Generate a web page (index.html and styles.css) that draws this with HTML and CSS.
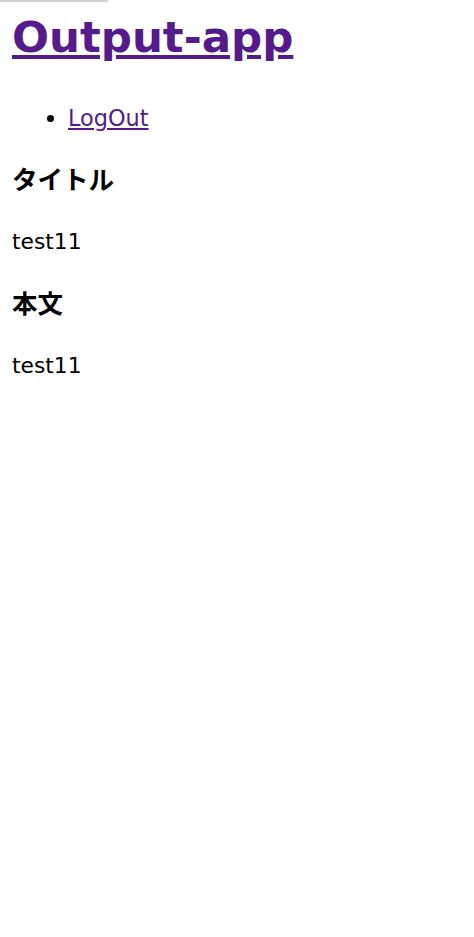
FILE: index.html
```html
<!DOCTYPE html>
<html lang="ja">
<head>
<meta charset="utf-8">
<title>Output-app</title>
<link rel="stylesheet" href="styles.css">
</head>
<body>
<div class="progress"></div>
<header class="site-header">
  <h1 class="site-title"><a href="#">Output-app</a></h1>
  <ul class="nav">
    <li><a href="#">LogOut</a></li>
  </ul>
</header>
<main class="post">
  <h3 class="label">タイトル</h3>
  <p class="value">test11</p>
  <h3 class="label">本文</h3>
  <p class="value">test11</p>
</main>
</body>
</html>
```

FILE: styles.css
```css
html, body {
  background: #ffffff;
}
body {
  margin: 0;
  padding: 0 12px;
  font-family: "DejaVu Sans", "Noto Sans CJK JP", sans-serif;
  color: #000;
}
.progress {
  position: absolute;
  left: 0;
  top: 0;
  width: 108px;
  height: 2px;
  background: #d2d2d2;
}
a {
  color: #551a8b;
  text-decoration: underline;
}
.site-title {
  margin: 11px 0 0;
  font-size: 43.5px;
  line-height: 52px;
  font-weight: bold;
}
.nav {
  margin: 39px 0 0;
  padding-left: 56px;
  font-size: 22.4px;
  line-height: 32px;
}
.label {
  margin: 26px 0 0;
  font-family: "Noto Sans CJK JP", sans-serif;
  font-size: 25.5px;
  line-height: 36px;
  font-weight: bold;
}
.value {
  margin: 30px 0 0;
  font-size: 21.8px;
  line-height: 32px;
}
```
